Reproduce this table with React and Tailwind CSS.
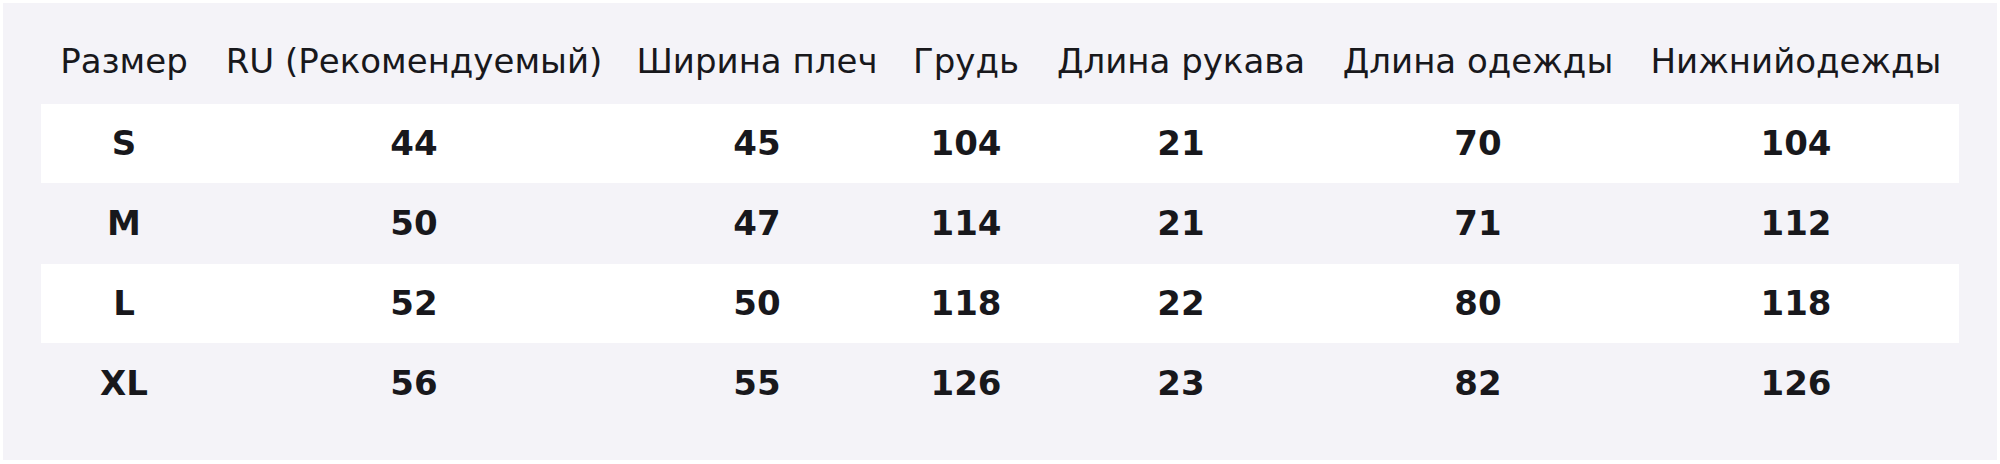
import React from "react";

const headers = [
  "Размер",
  "RU (Рекомендуемый)",
  "Ширина плеч",
  "Грудь",
  "Длина рукава",
  "Длина одежды",
  "Нижнийодежды",
];

const rows = [
  ["S", "44", "45", "104", "21", "70", "104"],
  ["M", "50", "47", "114", "21", "71", "112"],
  ["L", "52", "50", "118", "22", "80", "118"],
  ["XL", "56", "55", "126", "23", "82", "126"],
];

const App = () => {
  return (
    <div className="w-[2000px] h-[464px] bg-white p-[3px] pb-[4px]">
      <div
        className="h-full bg-[#f4f3f8] px-[38px] pt-[20px] text-[#18181c] text-[34px]"
        style={{ fontFamily: '"DejaVu Sans", sans-serif' }}
      >
        <table className="w-[1918px] table-fixed border-collapse">
          <colgroup>
            <col className="w-[166px]" />
            <col className="w-[414px]" />
            <col className="w-[272px]" />
            <col className="w-[146px]" />
            <col className="w-[284px]" />
            <col className="w-[310px]" />
            <col className="w-[326px]" />
          </colgroup>
          <thead>
            <tr className="h-[80px]">
              {headers.map((h) => (
                <th key={h} className="font-normal text-center whitespace-nowrap pb-[2px]">
                  {h}
                </th>
              ))}
            </tr>
          </thead>
          <tbody>
            {rows.map((r, i) => (
              <tr
                key={r[0]}
                className={
                  i % 2 === 0
                    ? "h-[80px] bg-white border-y border-[#f4f3f8]"
                    : "h-[80px]"
                }
              >
                {r.map((c, j) => (
                  <td key={j} className="font-bold text-center">
                    {c}
                  </td>
                ))}
              </tr>
            ))}
          </tbody>
        </table>
      </div>
    </div>
  );
};

export default App;
